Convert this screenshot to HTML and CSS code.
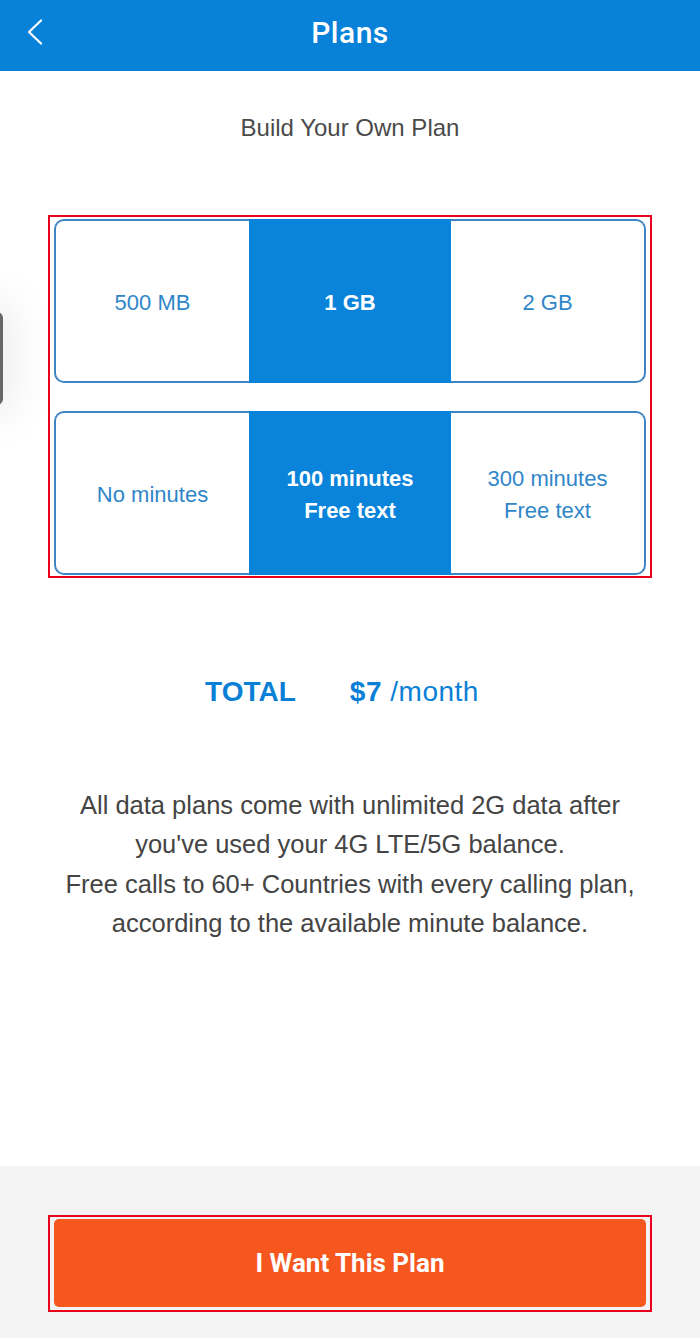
FILE: index.html
```html
<!DOCTYPE html>
<html lang="en">
<head>
  <meta charset="UTF-8" />
  <meta name="viewport" content="width=device-width, initial-scale=1.0"/>
  <title>Plans</title>
  <link rel="stylesheet" href="styles.css">
</head>
<body>
  <header class="top-bar">
    <button class="back-button" aria-label="Back">
      <svg width="18" height="26" viewBox="0 0 18 26">
        <polyline points="15,1.5 3,13 15,24.5" fill="none" stroke="#fff" stroke-width="2.2" stroke-linecap="round" stroke-linejoin="round"/>
      </svg>
    </button>
    <h1>Plans</h1>
  </header>

  <div class="side-tab"></div>

  <main class="content">
    <h2 class="subtitle">Build Your Own Plan</h2>

    <div class="plan-box">
      <div class="option-row">
        <div class="option first">500 MB</div>
        <div class="option selected">1 GB</div>
        <div class="option last">2 GB</div>
      </div>
      <div class="option-row">
        <div class="option first">No minutes</div>
        <div class="option selected">100 minutes<br>Free text</div>
        <div class="option last">300 minutes<br>Free text</div>
      </div>
    </div>

    <div class="total">
      <span class="total-label">TOTAL</span>
      <span class="total-price"><b>$7</b> /month</span>
    </div>

    <p class="info">
      All data plans come with unlimited 2G data after<br>
      you've used your 4G LTE/5G balance.<br>
      Free calls to 60+ Countries with every calling plan,<br>
      according to the available minute balance.
    </p>
  </main>

  <footer class="bottom-bar">
    <div class="button-box">
      <button class="main-button">I Want This Plan</button>
    </div>
  </footer>
</body>
</html>
```

FILE: styles.css
```css
* {
  box-sizing: border-box;
}

body {
  margin: 0;
  padding: 0;
  width: 700px;
  height: 1338px;
  display: flex;
  flex-direction: column;
  font-family: 'Liberation Sans', Arial, sans-serif;
  background: #fff;
  overflow: hidden;
  position: relative;
}

.top-bar {
  height: 71px;
  background: #0881d9;
  display: flex;
  align-items: center;
  justify-content: center;
  position: relative;
  flex-shrink: 0;
}

.top-bar h1 {
  margin: 0;
  color: #fff;
  font-family: Roboto, sans-serif;
  font-weight: 500;
  font-size: 30px;
  letter-spacing: 0.5px;
  position: relative;
  top: -3px;
}

.back-button {
  position: absolute;
  left: 26px;
  top: 19px;
  padding: 0;
  border: none;
  background: transparent;
  cursor: pointer;
}

.side-tab {
  position: absolute;
  left: -60px;
  top: 312px;
  width: 63px;
  height: 93px;
  background: #676767;
  border-radius: 6px;
  box-shadow: 0 0 45px 10px rgba(0, 0, 0, 0.08);
}

.content {
  flex: 1;
  display: flex;
  flex-direction: column;
  align-items: center;
}

.subtitle {
  margin: 43px 0 0;
  height: 28px;
  line-height: 28px;
  font-size: 24px;
  font-weight: normal;
  color: #4a4a4a;
}

.plan-box {
  margin-top: 73px;
  width: 604px;
  border: 2px solid #e8001c;
  padding: 2px 3px 1px 4px;
  display: flex;
  flex-direction: column;
  gap: 28px;
}

.option-row {
  display: grid;
  grid-template-columns: 195px 202px 195px;
  height: 164px;
}

.option {
  display: flex;
  align-items: center;
  justify-content: center;
  text-align: center;
  padding-top: 3px;
  font-size: 22px;
  line-height: 32px;
  color: #2f86c9;
  border: 2px solid #3d86c3;
}

.option.first {
  border-right: none;
  border-radius: 10px 0 0 10px;
}

.option.last {
  border-left: none;
  border-radius: 0 10px 10px 0;
}

.option.selected {
  border: none;
  background: #0a84da;
  color: #fff;
  font-weight: bold;
}

.total {
  margin-top: 97px;
  height: 34px;
  line-height: 34px;
  display: flex;
  gap: 54px;
  color: #0a7fd6;
  font-size: 28px;
  position: relative;
  left: -8px;
}

.total-label {
  font-weight: bold;
}

.total-price {
  letter-spacing: 0.5px;
}

.info {
  margin: 77px 0 0;
  text-align: center;
  font-size: 25.5px;
  line-height: 39.3px;
  color: #444;
}

.bottom-bar {
  height: 172px;
  flex-shrink: 0;
  background: #f3f3f3;
  padding: 49px 48px 0;
}

.button-box {
  border: 2px solid #e8001c;
  padding: 2px 4px 3px 4px;
}

.main-button {
  display: block;
  width: 100%;
  height: 88px;
  border: none;
  border-radius: 5px;
  background: #f5571f;
  color: #fff;
  font-family: Roboto, sans-serif;
  font-weight: bold;
  font-size: 26px;
  cursor: pointer;
}
```
